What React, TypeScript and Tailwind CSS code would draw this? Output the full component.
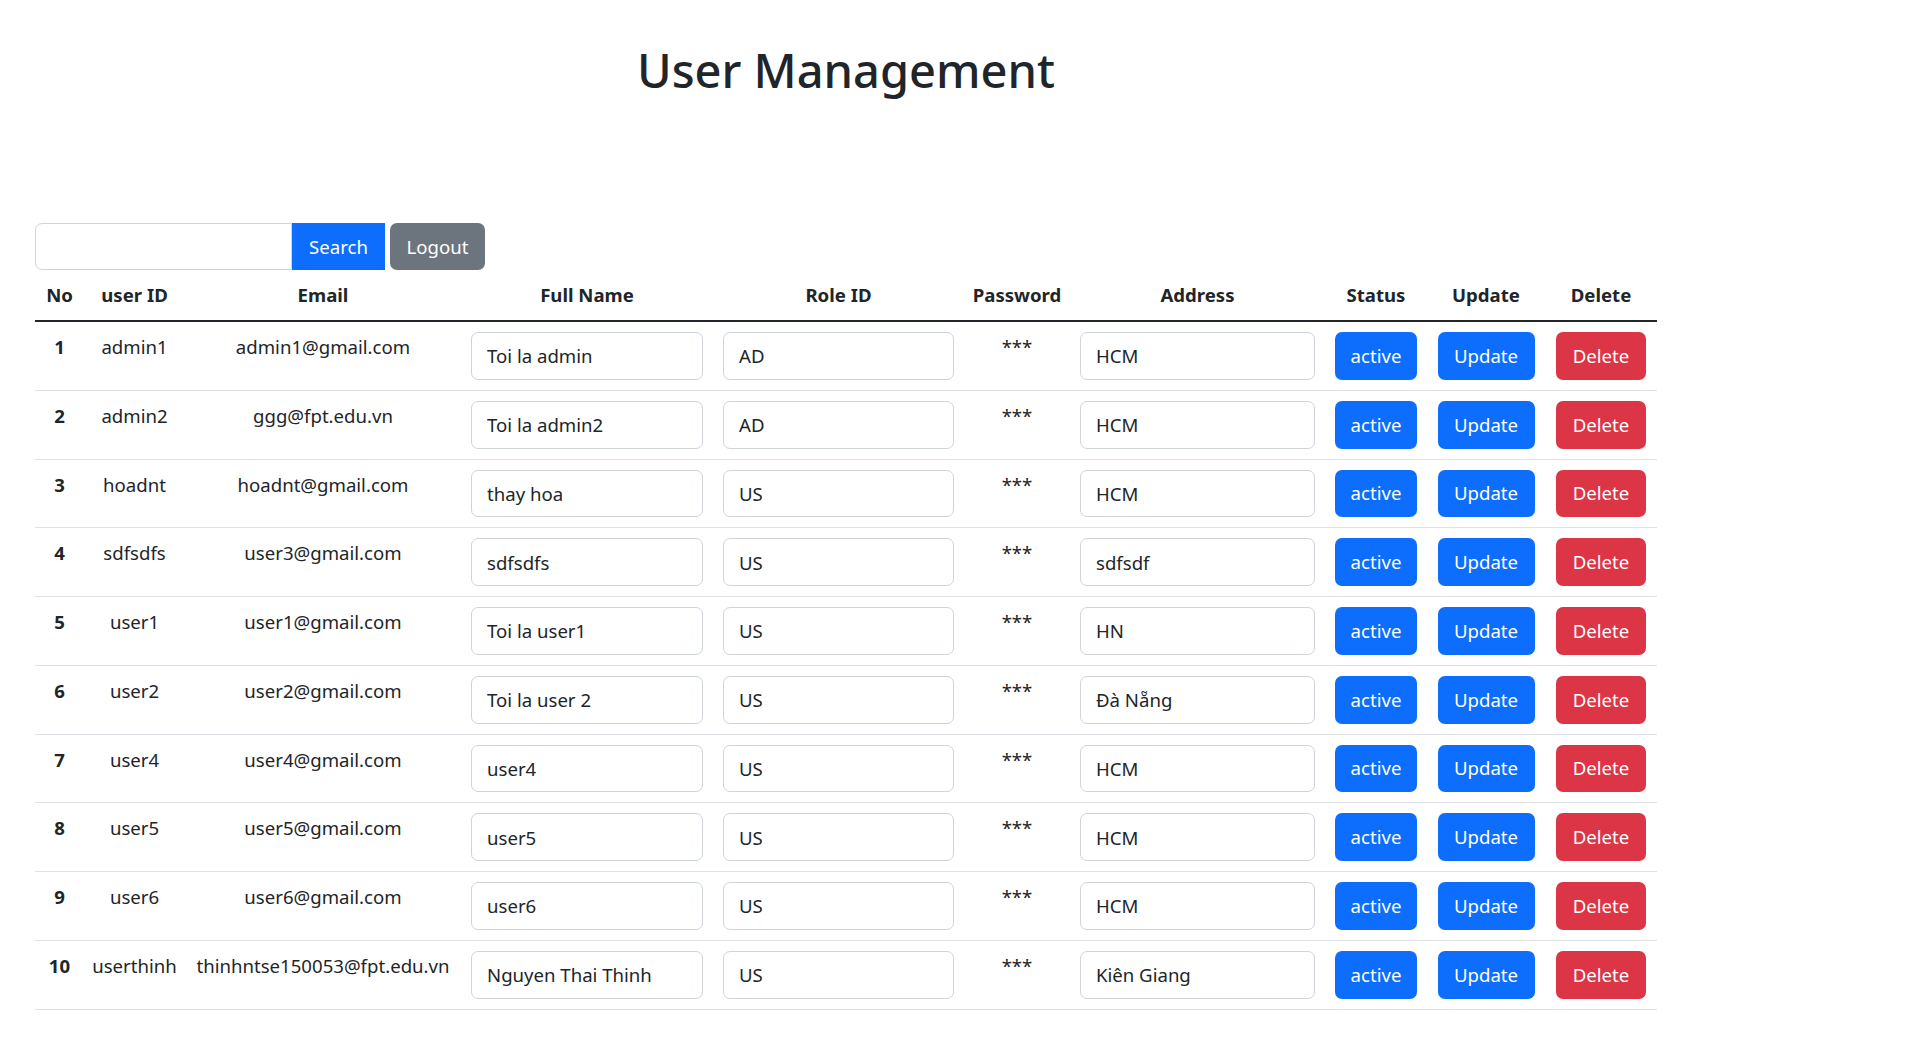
import React from "react";

type User = {
  id: string;
  email: string;
  fullName: string;
  roleId: string;
  address: string;
};

const users: User[] = [
  { id: "admin1", email: "admin1@gmail.com", fullName: "Toi la admin", roleId: "AD", address: "HCM" },
  { id: "admin2", email: "ggg@fpt.edu.vn", fullName: "Toi la admin2", roleId: "AD", address: "HCM" },
  { id: "hoadnt", email: "hoadnt@gmail.com", fullName: "thay hoa", roleId: "US", address: "HCM" },
  { id: "sdfsdfs", email: "user3@gmail.com", fullName: "sdfsdfs", roleId: "US", address: "sdfsdf" },
  { id: "user1", email: "user1@gmail.com", fullName: "Toi la user1", roleId: "US", address: "HN" },
  { id: "user2", email: "user2@gmail.com", fullName: "Toi la user 2", roleId: "US", address: "Đà Nẵng" },
  { id: "user4", email: "user4@gmail.com", fullName: "user4", roleId: "US", address: "HCM" },
  { id: "user5", email: "user5@gmail.com", fullName: "user5", roleId: "US", address: "HCM" },
  { id: "user6", email: "user6@gmail.com", fullName: "user6", roleId: "US", address: "HCM" },
  { id: "userthinh", email: "thinhntse150053@fpt.edu.vn", fullName: "Nguyen Thai Thinh", roleId: "US", address: "Kiên Giang" },
];

const headers = ["No", "user ID", "Email", "Full Name", "Role ID", "Password", "Address", "Status", "Update", "Delete"];

const inputClass =
  "block w-full h-[47.75px] px-[15px] border border-[#ced4da] rounded-[7px] bg-white text-[18.6px] text-[#212529] outline-none";

const btnClass =
  "flex items-center justify-center h-[47.75px] rounded-[7px] text-white text-[18.6px] whitespace-nowrap";

function Cell({ children }: { children: React.ReactNode }) {
  return <td className="px-[10px] py-[10px] align-top">{children}</td>;
}

export default function App() {
  return (
    <div
      className="min-h-screen bg-white text-[#212529] pl-[35px]"
      style={{ fontFamily: '"Noto Sans", "Open Sans", sans-serif' }}
    >
      <div className="w-[1622px]">
        <h1 className="text-center text-[47px] leading-[60px] font-medium pt-[40px]">
          User Management
        </h1>

        <form className="flex mt-[123px]" onSubmit={(e) => e.preventDefault()}>
          <input
            type="text"
            className="w-[257px] h-[47px] px-[15px] border border-[#ced4da] rounded-l-[7px] text-[18.6px] outline-none"
          />
          <button type="submit" className={`${btnClass} h-[47px] w-[93px] rounded-none bg-[#0d6efd]`}>
            Search
          </button>
          <button type="button" className={`${btnClass} h-[47px] w-[95px] ml-[5px] bg-[#6c757d]`}>
            Logout
          </button>
        </form>

        <table className="w-[1622px] table-fixed border-collapse text-center text-[18.6px] leading-[30px]">
          <colgroup>
            <col className="w-[49px]" />
            <col className="w-[101px]" />
            <col className="w-[276px]" />
            <col className="w-[252px]" />
            <col className="w-[251px]" />
            <col className="w-[106px]" />
            <col className="w-[255px]" />
            <col className="w-[102px]" />
            <col className="w-[118px]" />
            <col className="w-[112px]" />
          </colgroup>
          <thead>
            <tr className="border-b-2 border-[#212529]">
              {headers.map((h) => (
                <th key={h} className="px-[5px] py-[10px] font-bold whitespace-nowrap">
                  {h}
                </th>
              ))}
            </tr>
          </thead>
          <tbody>
            {users.map((u, i) => (
              <tr key={u.id} className="border-b border-[#dee2e6]">
                <th className="px-[5px] py-[10px] align-top font-bold">{i + 1}</th>
                <td className="px-[5px] py-[10px] align-top whitespace-nowrap">{u.id}</td>
                <td className="px-[5px] py-[10px] align-top whitespace-nowrap">{u.email}</td>
                <Cell>
                  <input type="text" defaultValue={u.fullName} className={inputClass} />
                </Cell>
                <Cell>
                  <input type="text" defaultValue={u.roleId} className={inputClass} />
                </Cell>
                <Cell>***</Cell>
                <Cell>
                  <input type="text" defaultValue={u.address} className={inputClass} />
                </Cell>
                <Cell>
                  <button className={`${btnClass} mx-auto w-[82px] bg-[#0d6efd]`}>active</button>
                </Cell>
                <Cell>
                  <button className={`${btnClass} mx-auto w-[97px] bg-[#0d6efd]`}>Update</button>
                </Cell>
                <Cell>
                  <button className={`${btnClass} mx-auto w-[90px] bg-[#dc3545]`}>Delete</button>
                </Cell>
              </tr>
            ))}
          </tbody>
        </table>
      </div>
    </div>
  );
}
